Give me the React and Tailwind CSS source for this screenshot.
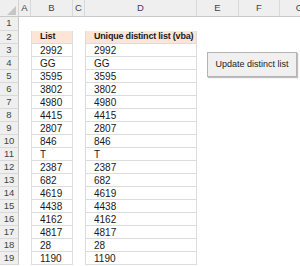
import React from "react";

const cols = [
  { id: "A", w: "w-[12px]" },
  { id: "B", w: "w-[42px]" },
  { id: "C", w: "w-[12px]" },
  { id: "D", w: "w-[112px]" },
  { id: "E", w: "w-[42px]" },
  { id: "F", w: "w-[41px]" },
  { id: "G", w: "w-[40px]" },
];

const list = [
  "2992", "GG", "3595", "3802", "4980", "4415", "2807", "846", "T",
  "2387", "682", "4619", "4438", "4162", "4817", "28", "1190",
];

function HeaderRow() {
  return (
    <div className="flex h-[17px] bg-[#efefef] border-b border-[#c8c8c8]">
      <div className="w-[19px] shrink-0 border-r border-[#d4d4d4] flex items-end justify-end pr-[2px] pb-[1px]">
        <svg width="9" height="9" viewBox="0 0 9 9">
          <polygon points="9,0 9,9 0,9" fill="#c6c6c6" />
        </svg>
      </div>
      {cols.map((c) => (
        <div
          key={c.id}
          className={`${c.w} shrink-0 border-r border-[#d9d9d9] flex items-center justify-center text-[#444] text-[9.5px]`}
        >
          {c.id}
        </div>
      ))}
    </div>
  );
}

function RowLabel({ n, tall }) {
  return (
    <div
      className={`w-[19px] shrink-0 bg-[#efefef] border-r border-[#c8c8c8] border-b border-b-[#d9d9d9] flex items-center justify-center text-[#444] text-[9.5px] ${tall ? "h-[14px]" : "h-[13px]"}`}
    >
      {n}
    </div>
  );
}

function Cell({ w, children, head, boxed }) {
  let cls = `${w} shrink-0 flex items-center pl-2 whitespace-nowrap overflow-hidden text-[#1a1a1a]`;
  if (boxed) cls += " border-b border-r border-[#dcdcdc]";
  if (head) cls += " bg-[#fce4d6] font-bold text-[9px] tracking-[-0.2px]";
  else cls += " text-[10px] pt-[1px]";
  return <div className={cls}>{children}</div>;
}

export default function App() {
  return (
    <div
      className="relative w-[300px] h-[266px] overflow-hidden bg-white text-black"
      style={{ fontFamily: '"Liberation Sans", Arial, sans-serif' }}
    >
      <HeaderRow />
      <div className="flex">
        <RowLabel n={1} tall />
        <div className="flex-1" />
      </div>
      {[null, ...list].map((v, i) => {
        const head = i === 0;
        return (
          <div key={i} className="flex h-[13px]">
            <RowLabel n={i + 2} />
            <div className="w-[12px] shrink-0" />
            <Cell w="w-[42px] border-l border-l-[#dcdcdc]" head={head} boxed>
              {head ? "List" : v}
            </Cell>
            <div className="w-[12px] shrink-0" />
            <Cell w="w-[112px] border-l border-l-[#dcdcdc]" head={head} boxed>
              {head ? "Unique distinct list (vba)" : v}
            </Cell>
            <div className="flex-1" />
          </div>
        );
      })}
      <button className="absolute left-[207px] top-[52px] w-[90px] h-[25px] bg-[#f0f0f0] border border-[#b4b4b4] shadow-[1px_1px_1px_rgba(0,0,0,0.25)] text-[9px] text-[#222] flex items-center justify-center">
        Update distinct list
      </button>
    </div>
  );
}
